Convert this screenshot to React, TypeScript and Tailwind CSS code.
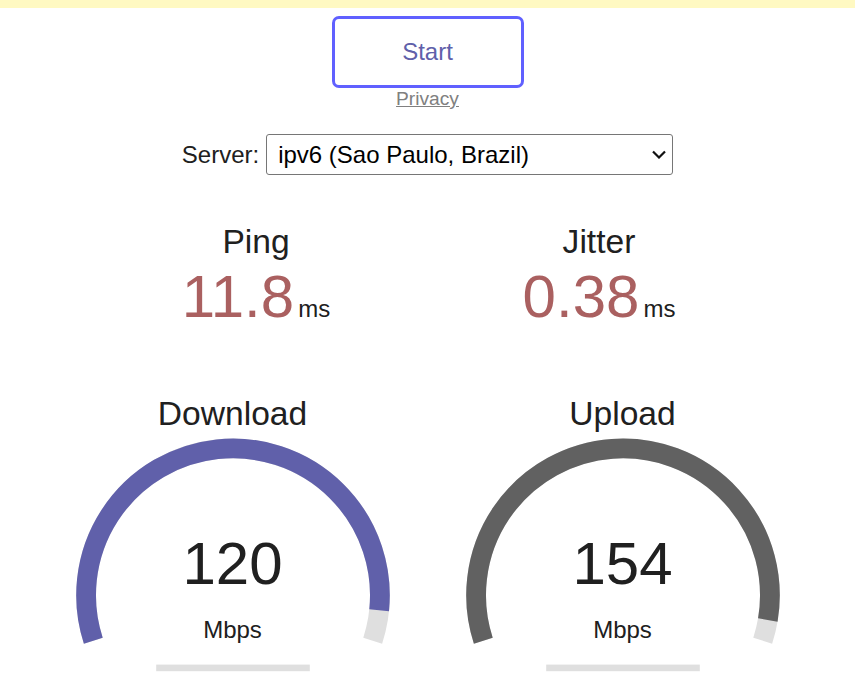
const R = 146.9;
const CX = 192;
const CY = 204.3;

// canvas-style angle (deg, clockwise from +x) -> point on the arc
function pt(deg: number) {
  const a = (deg * Math.PI) / 180;
  return [CX + R * Math.cos(a), CY + R * Math.sin(a)];
}

function arcPath(from: number, to: number) {
  const [x1, y1] = pt(from);
  const [x2, y2] = pt(to);
  const large = to - from > 180 ? 1 : 0;
  return `M ${x1} ${y1} A ${R} ${R} 0 ${large} 1 ${x2} ${y2}`;
}

function mbpsToAmount(s: number) {
  return 1 - 1 / Math.pow(1.3, Math.sqrt(s));
}

function Gauge({ name, value, color }: { name: string; value: number; color: string }) {
  const end = mbpsToAmount(value) * 216 - 198;
  return (
    <div className="relative w-[384px] h-[300px] flex flex-col items-center">
      <svg className="absolute inset-0" width="384" height="300" viewBox="0 0 384 300">
        <path d={arcPath(-198, 18)} fill="none" stroke="#dfdfdf" strokeWidth="19.8" />
        <path d={arcPath(-198, end)} fill="none" stroke={color} strokeWidth="19.8" />
        <rect x="115.2" y="273.6" width="153.6" height="6.6" fill="#dfdfdf" />
      </svg>
      <div className="relative mt-[3.4px] text-[33.6px] leading-[38.6px]">{name}</div>
      <div className="relative mt-[96px] text-[60px] leading-[69px]">{value}</div>
      <div className="relative mt-[17.4px] text-[24px] leading-[27.6px]">Mbps</div>
    </div>
  );
}

function Latency({ name, value }: { name: string; value: string }) {
  return (
    <div className="w-[336px] flex flex-col items-center">
      <div className="text-[33.6px] leading-[40px]">{name}</div>
      <div className="mt-[5px] flex items-baseline gap-[4px]">
        <span className="text-[60px] leading-[60px] text-[#aa6060]">{value}</span>
        <span className="text-[24px] leading-[24px]">ms</span>
      </div>
    </div>
  );
}

export default function App() {
  return (
    <div className="min-h-screen bg-white text-[#202020] text-[24px] font-['Liberation_Sans',Arial,sans-serif]">
      <div className="h-2 bg-[#fff9c2]" />
      <div className="flex flex-col items-center">
        <button className="mt-2 w-[192px] h-[72px] border-[3.6px] border-[#6060ff] rounded-[7px] text-[#6060aa] text-[24px] leading-[64px] cursor-pointer">
          Start
        </button>
        <a href="#" className="mt-[3px] text-[19.2px] leading-[16px] text-[#808080] underline">
          Privacy
        </a>
        <div className="mt-[27px] flex items-center gap-[7px]">
          <span className="leading-[41px]">Server:</span>
          <div className="w-[407px] h-[41px] border border-[#767676] rounded-[3px] flex items-center justify-between pl-[11px] pr-[6px] text-black">
            <span>ipv6 (Sao Paulo, Brazil)</span>
            <svg width="14" height="9" viewBox="0 0 14 9" fill="none" stroke="#111" strokeWidth="2.2">
              <path d="M1 1.5l6 6 6-6" />
            </svg>
          </div>
        </div>
        <div className="mt-[47px] flex gap-[7px]">
          <Latency name="Ping" value="11.8" />
          <Latency name="Jitter" value="0.38" />
        </div>
        <div className="mt-[64.4px] flex gap-[6px]">
          <Gauge name="Download" value={120} color="#6060aa" />
          <Gauge name="Upload" value={154} color="#616161" />
        </div>
      </div>
    </div>
  );
}
